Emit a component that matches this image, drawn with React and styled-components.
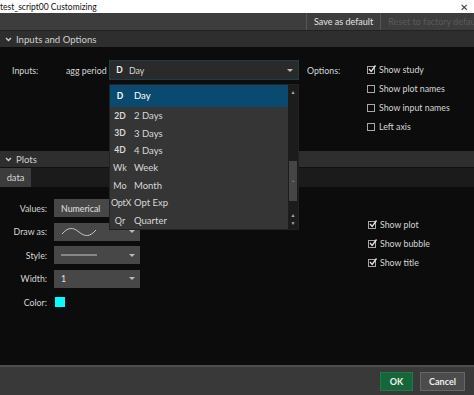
import styled, { createGlobalStyle } from "styled-components";

const Global = createGlobalStyle`
    html, body {
        margin: 0;
        padding: 0;
        background: #0c0c0c;
    }
    body {
        font-family: Lato, "Open Sans", sans-serif;
        font-size: 8.8px;
        color: #d6d6d6;
    }
`;

const Window = styled.div`
    width: 474px;
    height: 395px;
    display: flex;
    flex-direction: column;
    background: #0c0c0c;
    overflow: hidden;
    white-space: nowrap;
`;

const TitleBar = styled.div`
    height: 13px;
    background: #ffffff;
    color: #111;
    display: flex;
    align-items: center;
    justify-content: space-between;
    padding: 0 6px 0 0;
    font-size: 8.5px;
`;

const Close = styled.span`
    font-size: 10px;
    color: #333;
`;

const Toolbar = styled.div`
    height: 17px;
    background: #3d3d3d;
    display: flex;
    align-items: stretch;
    padding-left: 306px;
    overflow: hidden;
    border-bottom: 1px solid #222;
    font-size: 9px;
`;

const ToolButton = styled.div`
    display: flex;
    align-items: center;
    padding: 0 7px;
    border-left: 1px solid #555;
    flex-shrink: 0;
    color: ${(p) => (p.disabled ? "#5a5a5a" : "#e2e2e2")};
`;

const SectionHeader = styled.div`
    height: 16px;
    background: #2e2e2e;
    display: flex;
    align-items: center;
    gap: 4px;
    padding-left: 5px;
    color: #d0d0d0;
    font-size: 9.6px;
`;

const InputsBody = styled.div`
    height: 104px;
    display: flex;
    padding: 13px 0 0 12px;
    box-sizing: border-box;
`;

const Label = styled.div`
    width: ${(p) => p.w}px;
    height: 20px;
    display: flex;
    align-items: center;
    flex-shrink: 0;
`;

const ComboWrap = styled.div`
    position: relative;
    width: 190px;
    flex-shrink: 0;
`;

const Combo = styled.div`
    height: 20px;
    box-sizing: border-box;
    border: 1px solid #1d3c4e;
    background: #2a2a2a;
    display: flex;
    align-items: center;
    padding-left: 6px;
    gap: 6px;
`;

const Code = styled.span`
    width: 7px;
    text-align: center;
    font-weight: 700;
    font-size: 8.5px;
    color: #eee;
`;

const Arrow = styled.span`
    margin-left: auto;
    margin-right: 5px;
    width: 0;
    height: 0;
    border-left: 3px solid transparent;
    border-right: 3px solid transparent;
    border-top: 3px solid #bbb;
`;

const Menu = styled.div`
    position: absolute;
    top: 24px;
    left: 0;
    width: 190px;
    height: 146px;
    background: #353535;
    border: 1px solid #222;
    box-sizing: border-box;
    display: flex;
    z-index: 2;
`;

const MenuList = styled.div`
    flex: 1;
    display: flex;
    flex-direction: column;
    font-size: 9.5px;
`;

const MenuItem = styled.div`
    height: 17.6px;
    display: flex;
    align-items: center;
    gap: 5px;
    padding-left: 1px;
    background: ${(p) => (p.active ? "#0b4a6f" : "transparent")};
    color: ${(p) => (p.active ? "#fff" : "#d8d8d8")};
    &:first-child {
        height: 22px;
    }
`;

const ItemCode = styled.span`
    width: 18px;
    text-align: center;
    font-size: ${(p) => (p.bold ? "8.5px" : "9px")};
    font-weight: ${(p) => (p.bold ? 700 : 400)};
    letter-spacing: ${(p) => (p.tight ? "-0.3px" : "0")};
`;

const ScrollTrack = styled.div`
    width: 10px;
    background: #1c1c1c;
    display: flex;
    flex-direction: column;
    align-items: center;
    color: #aaa;
    font-size: 5px;
    padding: 4px 0 3px;
    box-sizing: border-box;
`;

const Thumb = styled.div`
    width: 8px;
    height: 40px;
    margin-top: 66px;
    background: #454545;
    display: flex;
    align-items: center;
    justify-content: center;
    color: #888;
`;

const ScrollArrows = styled.div`
    margin-top: auto;
    display: flex;
    flex-direction: column;
    gap: 3px;
    line-height: 5px;
`;

const OptionsCol = styled.div`
    display: flex;
    margin-left: 8px;
`;

const CheckList = styled.div`
    display: flex;
    flex-direction: column;
`;

const CheckRow = styled.div`
    height: 19px;
    display: flex;
    align-items: center;
    gap: 4px;
`;

const Box = styled.span`
    width: 8px;
    height: 8px;
    border: 1px solid #a8a8a8;
    box-sizing: border-box;
    position: relative;
`;

const Check = styled.svg`
    position: absolute;
    left: -1px;
    top: -3px;
`;

const TabRow = styled.div`
    height: 19px;
    background: #1b1b1b;
    display: flex;
    border-top: 1px solid #111;
`;

const Tab = styled.div`
    width: 31px;
    background: #3c3c3c;
    display: flex;
    align-items: center;
    justify-content: center;
    font-size: 9.3px;
`;

const PlotsBody = styled.div`
    flex: 1;
    display: flex;
    padding-top: 11px;
`;

const FieldCol = styled.div`
    display: flex;
    flex-direction: column;
    gap: 3.6px;
`;

const FieldRow = styled.div`
    display: flex;
    align-items: center;
    height: 20px;
`;

const FieldLabel = styled.div`
    width: 47px;
    text-align: right;
    margin-right: 7px;
`;

const Select = styled.div`
    width: 86px;
    height: 18px;
    background: #474747;
    display: flex;
    align-items: center;
    padding-left: 7px;
    box-sizing: border-box;
    color: #e0e0e0;
`;

const Swatch = styled.span`
    width: 10px;
    height: 10px;
    background: #00ffff;
    margin-left: 1px;
`;

const RightChecks = styled.div`
    margin-left: auto;
    margin-right: 22px;
    padding-top: 17px;
    width: 84px;
`;

const Footer = styled.div`
    height: 30px;
    background: #393939;
    border-top: 2px solid #4e4e4e;
    box-sizing: border-box;
    display: flex;
    align-items: center;
    justify-content: flex-end;
    gap: 7px;
    padding-right: 9px;
`;

const Button = styled.div`
    height: 17px;
    padding: 0 ${(p) => (p.primary ? 9 : 8)}px;
    display: flex;
    align-items: center;
    background: ${(p) => (p.primary ? "#17663a" : "#4c4c4c")};
    border: 1px solid ${(p) => (p.primary ? "#1f7a47" : "#666")};
    color: #eee;
    font-weight: 700;
    font-size: 9px;
`;

const Chevron = () => (
    <svg width="7" height="5" viewBox="0 0 7 5">
        <path d="M1 1 L3.5 3.5 L6 1" stroke="#cfcfcf" strokeWidth="1.4" fill="none" />
    </svg>
);

const CheckItem = ({ checked, label }) => (
    <CheckRow>
        <Box>
            {checked && (
                <Check width="10" height="10" viewBox="0 0 10 10">
                    <path d="M2 5 L4.2 7.5 L8.5 1.5" stroke="#e6e6e6" strokeWidth="1.3" fill="none" />
                </Check>
            )}
        </Box>
        {label}
    </CheckRow>
);

const periods = [
    ["D", "Day", true],
    ["2D", "2 Days", true],
    ["3D", "3 Days", true],
    ["4D", "4 Days", true],
    ["Wk", "Week"],
    ["Mo", "Month"],
    ["OptX", "Opt Exp"],
    ["Qr", "Quarter"],
];

const App = () => {
    return (
        <>
            <Global />
            <Window>
                <TitleBar>
                    <span>test_script00 Customizing</span>
                    <Close>✕</Close>
                </TitleBar>
                <Toolbar>
                    <ToolButton>Save as default</ToolButton>
                    <ToolButton disabled>Reset to factory defaults</ToolButton>
                </Toolbar>
                <SectionHeader>
                    <Chevron /> Inputs and Options
                </SectionHeader>
                <InputsBody>
                    <Label w={54}>Inputs:</Label>
                    <Label w={43}>agg period</Label>
                    <ComboWrap>
                        <Combo>
                            <Code>D</Code>
                            <span>Day</span>
                            <Arrow />
                        </Combo>
                        <Menu>
                            <MenuList>
                                {periods.map(([code, name, bold], i) => (
                                    <MenuItem key={code} active={i === 0}>
                                        <ItemCode bold={bold} tight={code === "OptX"}>{code}</ItemCode>
                                        {name}
                                    </MenuItem>
                                ))}
                            </MenuList>
                            <ScrollTrack>
                                ▲
                                <Thumb>▪</Thumb>
                                <ScrollArrows>
                                    <span>▲</span>
                                    <span>▼</span>
                                </ScrollArrows>
                            </ScrollTrack>
                        </Menu>
                    </ComboWrap>
                    <OptionsCol>
                        <Label w={60}>Options:</Label>
                        <CheckList>
                            <CheckItem checked label="Show study" />
                            <CheckItem label="Show plot names" />
                            <CheckItem label="Show input names" />
                            <CheckItem label="Left axis" />
                        </CheckList>
                    </OptionsCol>
                </InputsBody>
                <SectionHeader>
                    <Chevron /> Plots
                </SectionHeader>
                <TabRow>
                    <Tab>data</Tab>
                </TabRow>
                <PlotsBody>
                    <FieldCol>
                        <FieldRow>
                            <FieldLabel>Values:</FieldLabel>
                            <Select>Numerical</Select>
                        </FieldRow>
                        <FieldRow>
                            <FieldLabel>Draw as:</FieldLabel>
                            <Select>
                                <svg width="36" height="12" viewBox="0 0 36 12">
                                    <path d="M1 8 C7 1, 12 1, 18 6 S29 11, 35 4" stroke="#c8c8c8" strokeWidth="1" fill="none" />
                                </svg>
                                <Arrow />
                            </Select>
                        </FieldRow>
                        <FieldRow>
                            <FieldLabel>Style:</FieldLabel>
                            <Select>
                                <svg width="36" height="4" viewBox="0 0 36 4">
                                    <line x1="0" y1="2" x2="36" y2="2" stroke="#c8c8c8" strokeWidth="1" />
                                </svg>
                                <Arrow />
                            </Select>
                        </FieldRow>
                        <FieldRow>
                            <FieldLabel>Width:</FieldLabel>
                            <Select>
                                1
                                <Arrow />
                            </Select>
                        </FieldRow>
                        <FieldRow>
                            <FieldLabel>Color:</FieldLabel>
                            <Swatch />
                        </FieldRow>
                    </FieldCol>
                    <RightChecks>
                        <CheckItem checked label="Show plot" />
                        <CheckItem checked label="Show bubble" />
                        <CheckItem checked label="Show title" />
                    </RightChecks>
                </PlotsBody>
                <Footer>
                    <Button primary>OK</Button>
                    <Button>Cancel</Button>
                </Footer>
            </Window>
        </>
    );
};

export default App;
